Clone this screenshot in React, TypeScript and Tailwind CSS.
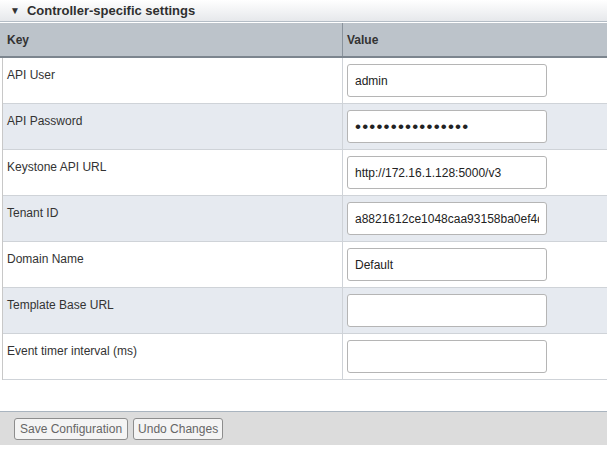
const rows: { key: string; value: string; type?: string }[] = [
  { key: 'API User', value: 'admin' },
  { key: 'API Password', value: 'secretpassword12', type: 'password' },
  { key: 'Keystone API URL', value: 'http://172.16.1.128:5000/v3' },
  { key: 'Tenant ID', value: 'a8821612ce1048caa93158ba0ef4d2c1' },
  { key: 'Domain Name', value: 'Default' },
  { key: 'Template Base URL', value: '' },
  { key: 'Event timer interval (ms)', value: '' },
]

export default function App() {
  return (
    <div className="w-[607px] h-[475px] overflow-hidden bg-white text-[12px] text-[#333] font-['Liberation_Sans',Arial,sans-serif]">
      <div className="h-[22px] flex items-center gap-[7px] pl-[10px] bg-gradient-to-b from-white to-[#e6e8eb] border-b border-[#b3bcc5]">
        <span className="text-[10px] text-[#333] leading-none">▼</span>
        <span className="text-[13px] font-bold text-[#2f2f2f]">Controller-specific settings</span>
      </div>
      <div className="mt-px h-[35px] flex bg-[#bcc3ca] border-b-2 border-[#7c858e] font-bold text-[#333]">
        <div className="w-[343px] pl-[7px] flex items-center border-r border-[#8a939c]">Key</div>
        <div className="flex-1 pl-[4px] flex items-center">Value</div>
      </div>
      <div className="ml-[2px] border-l border-[#c8c8c8]">
        {rows.map((r, i) => (
          <div
            key={r.key}
            className={`h-[46px] flex border-b border-[#cfd3d8] ${i % 2 === 1 ? 'bg-[#e6eaf0]' : 'bg-white'}`}
          >
            <div className="w-[340px] pl-[4px] pt-[10px] border-r border-[#cfd3d8] leading-[14px]">{r.key}</div>
            <div className="flex-1 pl-[4px] pt-[6px]">
              <input
                type={r.type ?? 'text'}
                defaultValue={r.value}
                className={`w-[200px] h-[33px] px-[7px] bg-white border border-[#b5b5b5] rounded-[3px] text-[#222] outline-none font-['Liberation_Sans',Arial,sans-serif] ${r.type === 'password' ? 'text-[17px] tracking-[1.2px]' : 'text-[12px]'}`}
              />
            </div>
          </div>
        ))}
      </div>
      <div className="mt-[31px] h-[34px] flex items-center gap-[5px] pl-[14px] bg-[#dcdcdc] border-t border-[#a9b4bf]">
        <button className="h-[22px] px-[5px] bg-[#f4f4f4] border border-[#8d8d8d] rounded-[3px] text-[12px] text-[#666]">Save Configuration</button>
        <button className="h-[22px] px-[4px] bg-[#f4f4f4] border border-[#8d8d8d] rounded-[3px] text-[12px] text-[#666]">Undo Changes</button>
      </div>
    </div>
  )
}
